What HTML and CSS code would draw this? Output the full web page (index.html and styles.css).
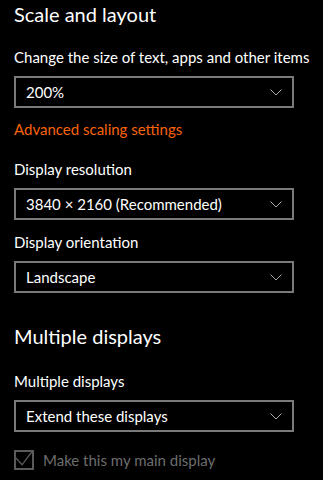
FILE: index.html
```html
<!DOCTYPE html>
<html>
<head>
<meta charset="utf-8">
<link rel="stylesheet" href="styles.css">
</head>
<body>
<div class="page">
  <h2 class="heading">Scale and layout</h2>
  <div class="label first">Change the size of text, apps and other items</div>
  <div class="select"><span>200%</span><svg class="chev" width="12" height="7" viewBox="0 0 12 7"><path d="M0.5 0.5 L6 6 L11.5 0.5" fill="none" stroke="#a8a8a8" stroke-width="1"/></svg></div>
  <div class="link">Advanced scaling settings</div>
  <div class="label gap-l">Display resolution</div>
  <div class="select"><span>3840 × 2160 (Recommended)</span><svg class="chev" width="12" height="7" viewBox="0 0 12 7"><path d="M0.5 0.5 L6 6 L11.5 0.5" fill="none" stroke="#a8a8a8" stroke-width="1"/></svg></div>
  <div class="label gap-s">Display orientation</div>
  <div class="select"><span>Landscape</span><svg class="chev" width="12" height="7" viewBox="0 0 12 7"><path d="M0.5 0.5 L6 6 L11.5 0.5" fill="none" stroke="#a8a8a8" stroke-width="1"/></svg></div>
  <h2 class="heading second">Multiple displays</h2>
  <div class="label gap-h">Multiple displays</div>
  <div class="select"><span>Extend these displays</span><svg class="chev" width="12" height="7" viewBox="0 0 12 7"><path d="M0.5 0.5 L6 6 L11.5 0.5" fill="none" stroke="#a8a8a8" stroke-width="1"/></svg></div>
  <div class="check">
    <span class="box"><svg class="tick" width="16" height="16" viewBox="0 0 16 16"><path d="M0 6 L6 12.8 L16.5 -1" fill="none" stroke="#5a5a5a" stroke-width="1.3"/></svg></span>
    <span class="check-text">Make this my main display</span>
  </div>
</div>
</body>
</html>
```
FILE: styles.css
```css
html, body {
  margin: 0;
  padding: 0;
  background: #000;
}
.page {
  padding: 0 0 0 14px;
  width: 280px;
  font-family: "Lato", "Noto Sans", sans-serif;
  color: #fff;
  white-space: nowrap;
}
.heading {
  margin: 0;
  font-size: 20px;
  font-weight: 400;
  line-height: 28px;
}
.heading.second {
  margin-top: 29px;
}
.label {
  font-size: 15px;
  line-height: 20px;
  margin-bottom: 9px;
}
.label.first { margin-top: 19px; }
.label.gap-l { margin-top: 20px; }
.label.gap-s { margin-top: 12px; }
.label.gap-h { margin-top: 21px; }
.select {
  box-sizing: border-box;
  height: 32px;
  border: 2px solid #7a7a7a;
  display: flex;
  align-items: center;
  justify-content: space-between;
  padding: 0 10px 0 10px;
  font-size: 15px;
}
.chev { display: block; }
.link {
  margin-top: 11px;
  font-size: 15px;
  line-height: 20px;
  color: #f7630c;
}
.check {
  margin-top: 18px;
  display: flex;
  align-items: center;
  gap: 9px;
}
.box {
  box-sizing: border-box;
  width: 20px;
  height: 20px;
  border: 2px solid #5a5a5a;
  display: flex;
  align-items: center;
  justify-content: center;
}
.tick { display: block; overflow: visible; }
.check-text {
  font-size: 15px;
  line-height: 20px;
  color: #6d6d6d;
}
```
